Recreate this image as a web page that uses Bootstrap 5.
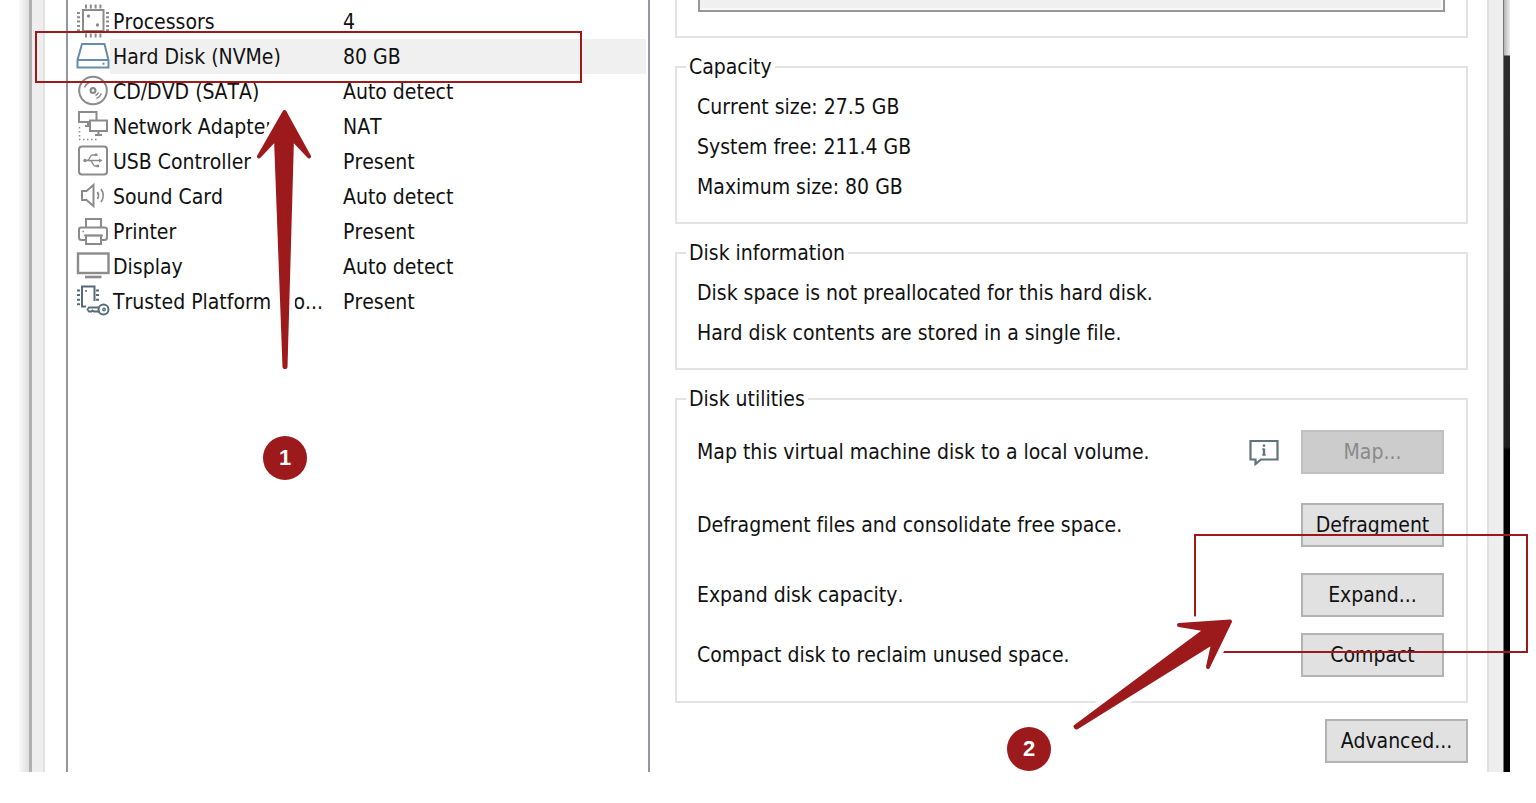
<!DOCTYPE html>
<html lang="en">
<head>
<meta charset="utf-8">
<meta name="viewport" content="width=device-width, initial-scale=1">
<title>Virtual Machine Settings</title>
<link href="https://cdn.jsdelivr.net/npm/bootstrap@5.3.0/dist/css/bootstrap.min.css" rel="stylesheet">
<style>
  :root { --mark-red: #9c191c; }
  body { font-family: "DejaVu Sans Condensed", "DejaVu Sans", sans-serif; font-size: 21px; line-height: 30px; font-kerning: none; font-variant-ligatures: none; color: #111; background: #fff; overflow-x: hidden; }
  .vm-window { margin: 0 26px 0 19px; }

  /* window frame */
  .frame-shadow { width: 10px; background: linear-gradient(90deg, #fafafa, #dedede); }
  .frame-left { width: 16px; background: #eee; border-left: 3px solid #b1b1b1; border-right: 2px solid #e2e2e2; margin-right: 21px; }
  .frame-right { width: 16px; background: #eee; border-left: 2px solid #e0e0e0; }
  .frame-outer { width: 7px; border-left: 1px solid #777; background: linear-gradient(#0000 55px, #2b2d2e 56px, #1e1f20 447px, #000 450px), linear-gradient(90deg, #b4b4b4, #f0f0f0); }

  /* device list */
  .device-pane { flex: 0 0 584px; border: solid #9496a0; border-width: 0 2px; padding-top: 4px; }
  .device-list { width: 578px; table-layout: fixed; line-height: 33px; }
  .device-list td, .device-list th { padding: 2px 0 0 3px; height: 35px; font-weight: 400; white-space: nowrap; }
  .device-list .ico { width: 42px; padding: 0 0 0 8px; }
  .device-list .nm { width: 230px; }
  .device-list .picked .nm, .device-list .picked .val { background: #f0f0f0; }
  .ico svg { display: block; width: 34px; height: 35px; fill: none; stroke: #8b8b8b; stroke-width: 2; }
  .ico .ico-blue { stroke: #668dac; }
  .ico .ico-slate { stroke: #566b7a; }

  /* hard disk settings */
  .settings-pane { padding: 0 19px 9px 25px; }
  .group { border: 2px solid #e3e3e3; padding: 0 9px; margin-bottom: 14px; }
  .group legend { float: none; width: auto; margin: 0 0 5px; padding: 0 3px; font-size: 21px; line-height: 30px; }
  .group-body { padding: 0 13px 15px 11px; }
  .group-body p { margin: 0; line-height: 40px; }
  .file-group { border-top: 0; padding: 0 21px 24px; }
  .file-box { display: block; width: 100%; height: 12px; border: 2px solid #979797; border-top: 0; background: #f0f0f0; border-radius: 0; box-shadow: inset 0 -2px #fafafa, inset -2px 0 #fafafa; padding: 0; }
  .utilities { padding: 11px 13px 24px 11px; }
  .row-defrag { margin-top: 29px; }
  .row-expand { margin-top: 26px; }
  .footer-actions { padding-top: 2px; }
  .btn-win { --bs-btn-font-size: 21px; --bs-btn-line-height: 30px; --bs-btn-padding-x: 0; --bs-btn-padding-y: 5px; --bs-btn-border-width: 2px; --bs-btn-border-radius: 0;
    --bs-btn-color: #111; --bs-btn-bg: #e1e1e1; --bs-btn-border-color: #b3b3b3; --bs-btn-hover-bg: #e5f1fb; --bs-btn-hover-border-color: #0078d7;
    --bs-btn-disabled-color: #8a8a8a; --bs-btn-disabled-bg: #ccc; --bs-btn-disabled-border-color: #c0c0c0; --bs-btn-disabled-opacity: 1; width: 143px; flex: none; }
  .info { width: 30px; height: 28px; margin-right: 22px; flex: none; }

  /* callouts drawn over the dialog */
  .callout-box, .callout-arrow, .callout-num { position: absolute; pointer-events: none; }
  .callout-box { border: 2px solid var(--mark-red); }
  .callout-arrow path { fill: var(--mark-red); stroke: var(--mark-red); stroke-width: 4; stroke-linejoin: round; }
  .callout-arrow .halo { fill: #fff; stroke: #fff; stroke-width: 15; }
  .callout-num { width: 44px; height: 44px; line-height: 44px; border-radius: 50%; text-align: center; background: var(--mark-red); color: #fff; font-family: "Liberation Sans", sans-serif; font-weight: 700; font-size: 22px; }
  .box-disk { left: -33px; top: 31px; width: 547px; height: 52px; }
  .arrow-disk { left: 182px; top: 100px; width: 70px; height: 280px; }
  .num-disk { left: 195px; top: 436px; }
  .box-expand { right: -41px; top: 534px; width: 334px; height: 119px; }
  .arrow-expand { right: 247px; top: 609px; width: 180px; height: 130px; }
  .num-expand { right: 436px; top: 727px; }
</style>
</head>
<body>
<main class="vm-window d-flex">
  <div class="frame-shadow"></div>
  <div class="frame-left"></div>

  <section class="device-pane position-relative" aria-label="Devices">
    <table class="device-list">
      <tbody>
        <tr>
          <td class="ico"><svg viewBox="0 0 34 35"><rect x="7" y="6" width="20.500" height="21"/><path stroke-width="4" stroke-dasharray="2 2.800" d="M9 2.500h17M9 31.500h17"/><path stroke-width="3" stroke-dasharray="2 2.300" d="M2.500 8v20M31.500 8v20"/><g fill="#8b8b8b" stroke="none"><circle cx="12.500" cy="12" r="1.700"/><circle cx="21.500" cy="21" r="1.700"/></g></svg></td>
          <th scope="row" class="nm">Processors</th><td class="val">4</td>
        </tr>
        <tr class="picked">
          <td class="ico"><svg class="ico-blue" viewBox="0 0 34 35"><path d="M6 5h22.500L32.500 21v7.500h-31V21zM2 21h30"/><path d="M26.500 24.700h2"/></svg></td>
          <th scope="row" class="nm">Hard Disk (NVMe)</th><td class="val">80 GB</td>
        </tr>
        <tr>
          <td class="ico"><svg viewBox="0 0 34 35"><circle cx="17" cy="16.500" r="13.800"/><circle cx="17" cy="16.500" r="2.400" stroke-width="2.200"/><path d="M8.500 13.500a9 9 0 0 1 4.500-5M25.500 19.500a9 9 0 0 1-5 5M22.500 18.500a6 6 0 0 1-3 3" stroke-width="1.500"/></svg></td>
          <th scope="row" class="nm">CD/DVD (SATA)</th><td class="val">Auto detect</td>
        </tr>
        <tr>
          <td class="ico"><svg viewBox="0 0 34 35"><path d="M14 13H3V3h17.500v8M14 11.500h17V22H14zM22.500 22v4M19 26h7M12 13v4M9 17h5"/><path stroke-dasharray="1.500 2.500" d="M3.500 18v12M3 30.500h19" stroke-width="1.500"/></svg></td>
          <th scope="row" class="nm">Network Adapter</th><td class="val">NAT</td>
        </tr>
        <tr>
          <td class="ico"><svg viewBox="0 0 34 35"><rect x="3" y="2.500" width="28" height="28" rx="3"/><path stroke-width="1.400" d="M8 16.500h16M11 16.500c3 0 2.500-5.500 5.500-5.500H19M14 16.500c2.500 0 2.500 5.500 5 5.500h2"/><path fill="#8b8b8b" stroke="none" d="M23 14.500l3.500 2-3.500 2zM19 9.500h2.500v2.500H19zM20.500 20.800H23v2.500h-2.500z"/><circle cx="9" cy="16.500" r="1.700" fill="#8b8b8b" stroke="none"/></svg></td>
          <th scope="row" class="nm">USB Controller</th><td class="val">Present</td>
        </tr>
        <tr>
          <td class="ico"><svg viewBox="0 0 34 35"><path d="M6 12h4.500L17.500 6v21l-7-6H6z"/><path stroke-width="1.700" d="M21.500 13q2 3.500 0 7M25 10q4.500 6.500 0 13"/></svg></td>
          <th scope="row" class="nm">Sound Card</th><td class="val">Auto detect</td>
        </tr>
        <tr>
          <td class="ico"><svg viewBox="0 0 34 35"><path d="M10 13V5h15v8M10 26H5.500Q3 26 3 23.500v-8Q3 13.500 5.500 13.500h23Q31 13.500 31 15.500v8Q31 26 28.500 26H25M10 21.500h15V30H10z"/><path d="M6.500 17.500H8M8 21.500h19" stroke-width="1.500"/></svg></td>
          <th scope="row" class="nm">Printer</th><td class="val">Present</td>
        </tr>
        <tr>
          <td class="ico"><svg viewBox="0 0 34 35"><rect x="2" y="4.500" width="30.500" height="19.500" stroke-width="2.400"/><path d="M9 28h16.500" stroke-width="2.600"/></svg></td>
          <th scope="row" class="nm">Display</th><td class="val">Auto detect</td>
        </tr>
        <tr>
          <td class="ico"><svg class="ico-slate" viewBox="0 0 34 35"><path d="M10 22.500H6V2.500h12.500V17"/><path d="M10 6v2" stroke-width="1.500"/><path stroke-dasharray="2 2.600" stroke-width="3" d="M2.500 5.500v16M21.500 5.500v12"/><path d="M22.500 23.500H13l-1.500 2 1.500 2h2.500l1-1 1.500 1h5.500" stroke-width="1.800"/><circle cx="27.500" cy="25.500" r="5"/><circle cx="28" cy="25.500" r="1.200" stroke-width="1.400"/></svg></td>
          <th scope="row" class="nm">Trusted Platform Mo...</th><td class="val">Present</td>
        </tr>
      </tbody>
    </table>

    <div class="callout-box box-disk"></div>
    <svg class="callout-arrow arrow-disk" viewBox="250 100 70 280" aria-hidden="true">
      <path class="halo" d="M284.500 112 309 156.500 292 138.500 285.500 367h-1L276 138.500 259 156.500z"/>
      <path d="M284.500 112 309 156.500 292 138.500 285.500 367h-1L276 138.500 259 156.500z"/>
    </svg>
    <div class="callout-num num-disk">1</div>
  </section>

  <section class="settings-pane flex-grow-1 position-relative" aria-label="Hard disk settings">
    <fieldset class="group file-group">
      <input class="file-box" type="text" readonly aria-label="Disk file">
    </fieldset>

    <fieldset class="group">
      <legend>Capacity</legend>
      <div class="group-body">
        <p>Current size: 27.5 GB</p>
        <p>System free: 211.4 GB</p>
        <p>Maximum size: 80 GB</p>
      </div>
    </fieldset>

    <fieldset class="group">
      <legend>Disk information</legend>
      <div class="group-body">
        <p>Disk space is not preallocated for this hard disk.</p>
        <p>Hard disk contents are stored in a single file.</p>
      </div>
    </fieldset>

    <fieldset class="group">
      <legend>Disk utilities</legend>
      <div class="utilities">
        <div class="d-flex align-items-center">
          <span class="me-auto">Map this virtual machine disk to a local volume.</span>
          <svg class="info" viewBox="0 0 30 28" fill="none" stroke="#61737f" stroke-width="2.200" role="img" aria-label="Information"><path d="M1.500 3h27v18.500H12l-5.500 4.500v-4.500h-5z"/><path d="M15 6.500v2.300M15 10.500v7" stroke-width="2.400"/><path d="M13 11h2M13 17h4" stroke-width="1.200"/></svg>
          <button type="button" class="btn btn-win" disabled>Map...</button>
        </div>
        <div class="d-flex align-items-center row-defrag">
          <span class="me-auto">Defragment files and consolidate free space.</span>
          <button type="button" class="btn btn-win">Defragment</button>
        </div>
        <div class="d-flex align-items-center row-expand">
          <span class="me-auto">Expand disk capacity.</span>
          <button type="button" class="btn btn-win">Expand...</button>
        </div>
        <div class="d-flex align-items-center mt-3">
          <span class="me-auto">Compact disk to reclaim unused space.</span>
          <button type="button" class="btn btn-win">Compact</button>
        </div>
      </div>
    </fieldset>

    <div class="d-flex justify-content-end footer-actions">
      <button type="button" class="btn btn-win">Advanced...</button>
    </div>

    <div class="callout-box box-expand"></div>
    <svg class="callout-arrow arrow-expand" viewBox="1060 610 180 130" aria-hidden="true">
      <path class="halo" d="M1230 622.500 1208 668 1213.500 643 1076.500 728.500 1075.500 727.500 1206 630.500 1179 626z"/>
      <path d="M1230 622.500 1208 668 1213.500 643 1076.500 728.500 1075.500 727.500 1206 630.500 1179 626z"/>
    </svg>
    <div class="callout-num num-expand">2</div>
  </section>

  <div class="frame-right"></div>
  <div class="frame-outer"></div>
</main>
<script src="https://cdn.jsdelivr.net/npm/bootstrap@5.3.0/dist/js/bootstrap.bundle.min.js"></script>
</body>
</html>
